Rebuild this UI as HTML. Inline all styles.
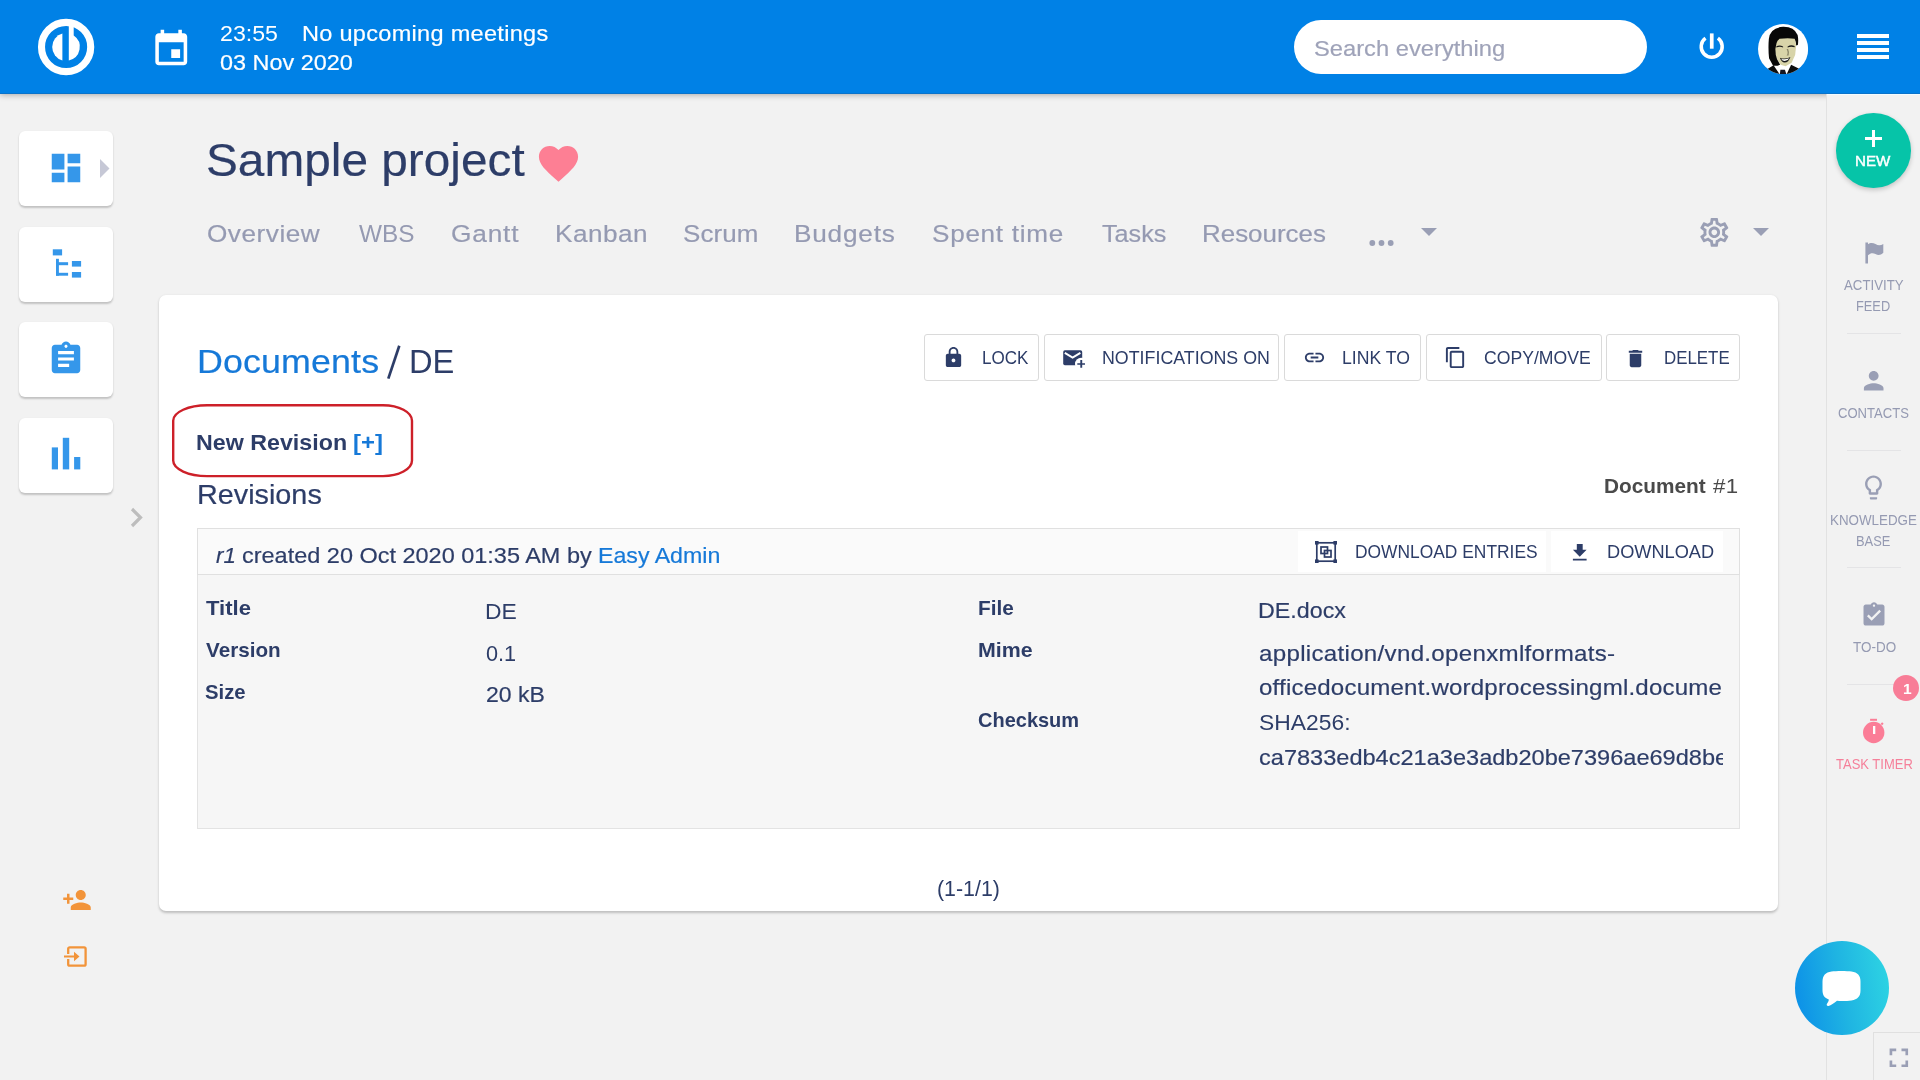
<!DOCTYPE html>
<html>
<head>
<meta charset="utf-8">
<title>Sample project - Documents</title>
<style>
*{box-sizing:border-box;margin:0;padding:0}
html,body{width:1920px;height:1080px;overflow:hidden}
body{background:#f2f2f2;font-family:"Liberation Sans",sans-serif;color:#2d3d68;position:relative}
.abs{position:absolute}
.t{position:absolute;white-space:nowrap;line-height:1;-webkit-text-stroke:0.2px currentColor;transform-origin:0 50%}
svg{position:absolute;display:block;overflow:visible}
#hdr{left:0;top:0;width:1920px;height:94px;background:#0081e6;border-bottom:1.500px solid #0a73ca;box-shadow:0 1px 6px rgba(0,0,0,.3)}
#search{left:1294px;top:20px;width:353px;height:54px;border-radius:27px;background:#fff}
.card{position:absolute;left:19px;width:94px;height:75px;background:#fff;border-radius:6px;box-shadow:0 1.5px 2px rgba(0,0,0,.2)}
#rbar{left:1826px;top:94px;width:94px;height:986px;background:#f2f2f2;border-left:1px solid #e2e2e2;box-shadow:inset 0 1px 0 #f3fcff}
.rsep{position:absolute;left:1847px;width:54px;height:1px;background:#e4e4e6}
#panel{left:159px;top:295px;width:1619px;height:616px;background:#fff;border-radius:7px;box-shadow:0 1.5px 2.5px rgba(0,0,0,.21)}
.btn{position:absolute;top:334px;height:47px;border:1px solid #dadada;border-radius:3px;background:#fff}
#rev{left:197px;top:528px;width:1543px;height:301px;background:#f6f6f6;border:1px solid #e3e3e3}
#revh{left:197px;top:528px;width:1543px;height:47px;background:#fafafa;border:1px solid #e0e0e0}
.wbtn{position:absolute;top:531px;height:41px;background:#fff}
.clip{position:absolute;left:1259px;width:463px;height:30px;overflow:hidden}
.clip .t{left:1.3px}
</style>

</head>
<body>
<div id="hdr" class="abs"></div>
<div id="search" class="abs"></div>
<div class="card" style="top:131px"></div>
<div class="card" style="top:227px"></div>
<div class="card" style="top:322px"></div>
<div class="card" style="top:418px"></div>
<div id="rbar" class="abs"></div>
<div class="rsep" style="top:333px"></div>
<div class="rsep" style="top:450px"></div>
<div class="rsep" style="top:567px"></div>
<div class="rsep" style="top:684px"></div>
<div id="panel" class="abs"></div>
<div class="btn" style="left:924px;width:115px"></div>
<div class="btn" style="left:1044px;width:235px"></div>
<div class="btn" style="left:1284px;width:137px"></div>
<div class="btn" style="left:1426px;width:176px"></div>
<div class="btn" style="left:1606px;width:134px"></div>
<div id="rev" class="abs"></div>
<div id="revh" class="abs"></div>
<div class="wbtn" style="left:1298px;width:248px"></div>
<div class="wbtn" style="left:1551px;width:172px"></div>

<!-- logo -->
<svg style="left:38px;top:19px" width="56" height="56" viewBox="0 0 56 56">
<circle cx="28.1" cy="28" r="24.6" fill="none" stroke="#fff" stroke-width="7.1"/>
<path d="M24.4 14.6 A13.9 13.9 0 0 0 24.4 41.4 Z" fill="#fff"/>
<path d="M30.8 41.5 V5 H35.7 V16.4 A13.9 13.9 0 0 1 30.8 41.5 Z" fill="#fff"/>
</svg>
<!-- calendar -->
<svg style="left:149.5px;top:28.2px" width="42.5" height="42.5" viewBox="0 0 24 24"><path fill="#fff" d="M17 12h-5v5h5v-5zM16 1v2H8V1H6v2H5c-1.11 0-1.99.9-1.99 2L3 19c0 1.1.89 2 2 2h14c1.1 0 2-.9 2-2V5c0-1.1-.9-2-2-2h-1V1h-2zm3 18H5V8h14v11z"/></svg>
<!-- power -->
<svg style="left:1690px;top:25px" width="40" height="40" viewBox="0 0 40 40"><path d="M27.900 13.200 A10.500 10.500 0 1 1 15.500 13.200" fill="none" stroke="#fff" stroke-width="3.500"/><rect x="19.900" y="8.400" width="3.700" height="15.300" fill="#fff"/></svg>
<!-- avatar -->
<svg style="left:1758px;top:23.600px" width="50.200" height="50.200" viewBox="0 0 50 50">
<defs><clipPath id="avc"><circle cx="25" cy="25" r="25"/></clipPath></defs>
<g clip-path="url(#avc)">
<rect width="50" height="50" fill="#fff"/>
<path d="M6 50 L9 45 L15.500 41.200 L21.500 50 Z M28.500 50 L33 40.500 L43 45.500 L46 50 Z" fill="#0d0d0d"/>
<path d="M22.300 45.500 h4.500 l1.500 4.500 h-6.500 z" fill="#15151f"/>
<path d="M16.500 16 L20 13.500 L37 14 L38 22 L37 31 L33.500 38.500 L27.500 42.200 L22.500 40.500 L18.500 34 L16.500 27 Z" fill="#d8d4a9"/>
<path d="M11 34 Q10 24 10.800 15 Q12 3.500 25 2.800 Q36 2.600 39.500 11 Q40.500 16 39.700 21 L38 21.500 Q37.800 17 36.500 14.800 Q30 13.500 21.500 14.800 Q19 16.500 18.500 19 L17.300 25 Q17.300 31 19 35 L22 40.500 L19.500 41.500 L15 41.500 Z" fill="#080808"/>
<path d="M18.300 22.200 Q21.500 20.600 25 22.400 L25 23.300 Q21.500 22.200 18.300 23.400Z M29.500 22.300 Q33 20.400 36.500 22 L36.500 23.200 Q33 22 29.500 23.300Z" fill="#1a1a1a"/>
<path d="M28.500 25 Q30.500 29 28.500 31.500 L30.500 31.500 Q31.500 28 30 25Z" fill="#8a8668"/>
<path d="M21.800 33.500 Q27 35.500 32.300 32.800 Q30.500 38.300 26.500 38.300 Q23.500 38 21.800 33.500Z" fill="#1a1a1a"/>
<path d="M23 34.500 Q27 36 31.200 34 Q29.500 36.800 26.600 36.900 Q24.300 36.800 23 34.500Z" fill="#fff"/>
</g></svg>
<!-- hamburger -->
<div class="abs" style="left:1857px;top:34px;width:32px;height:3.8px;background:#fff"></div>
<div class="abs" style="left:1857px;top:41px;width:32px;height:3.8px;background:#fff"></div>
<div class="abs" style="left:1857px;top:48px;width:32px;height:3.8px;background:#fff"></div>
<div class="abs" style="left:1857px;top:55px;width:32px;height:3.8px;background:#fff"></div>

<!-- left card icons -->
<svg style="left:47px;top:149px" width="38" height="38" viewBox="0 0 24 24"><path fill="#3597ea" d="M3 13h8V3H3v10zm0 8h8v-6H3v6zm10 0h8V11h-8v10zm0-18v6h8V3h-8z"/></svg>
<svg style="left:99.5px;top:159px" width="10" height="19" viewBox="0 0 10 19"><path fill="#c6c8d6" d="M0 0 L9.5 9.5 L0 19Z"/></svg>
<svg style="left:0;top:0" width="120" height="300" viewBox="0 0 120 300"><g fill="#3597ea">
<rect x="52.8" y="249.3" width="9.3" height="6.1"/>
<rect x="56" y="258.8" width="2.9" height="16.9"/>
<rect x="56" y="262.2" width="12.1" height="3"/>
<rect x="56" y="272.8" width="12.1" height="2.9"/>
<rect x="71.9" y="261" width="9.2" height="5.6"/>
<rect x="71.9" y="272" width="9.2" height="5.6"/>
</g></svg>
<svg style="left:47px;top:340px" width="38" height="38" viewBox="0 0 24 24"><path fill="#3597ea" d="M19 3h-4.180C14.4 1.84 13.3 1 12 1c-1.3 0-2.4.84-2.82 2H5c-1.1 0-2 .9-2 2v14c0 1.1.9 2 2 2h14c1.1 0 2-.9 2-2V5c0-1.1-.9-2-2-2zm-7 0c.55 0 1 .45 1 1s-.45 1-1 1-1-.45-1-1 .45-1 1-1zm2 14H7v-2h7v2zm3-4H7v-2h10v2zm0-4H7V7h10v2z"/></svg>
<svg style="left:0;top:0" width="120" height="500" viewBox="0 0 120 500"><g fill="#3597ea">
<rect x="51.8" y="447.4" width="6.2" height="22"/>
<rect x="62.8" y="437.8" width="6.4" height="31.6"/>
<rect x="74.1" y="457" width="6.2" height="12.4"/>
</g></svg>
<!-- chevron -->
<svg style="left:130px;top:507px" width="13" height="21" viewBox="0 0 13 21"><path d="M2 2 L10.5 10.5 L2 19" fill="none" stroke="#bdbdbd" stroke-width="3.2"/></svg>
<!-- bottom-left icons -->
<svg style="left:61.5px;top:884.8px" width="30" height="30" viewBox="0 0 24 24"><path fill="#f2943a" d="M15 12c2.21 0 4-1.79 4-4s-1.79-4-4-4-4 1.79-4 4 1.79 4 4 4zm-9-2V7H4v3H1v2h3v3h2v-3h3v-2H6zm9 4c-2.67 0-8 1.34-8 4v2h16v-2c0-2.66-5.33-4-8-4z"/></svg>
<svg style="left:64px;top:945.5px" width="23" height="21" viewBox="0 0 23 21"><g fill="none" stroke="#f2943a" stroke-width="2.3"><rect x="4.2" y="1.3" width="17.4" height="18.4" rx="1.5"/></g><rect x="2.5" y="8" width="4" height="5" fill="#f2f2f2"/><path d="M0 9.4 h10 v-3.6 l5.5 4.7 l-5.5 4.7 v-3.6 h-10z" fill="#f2943a"/></svg>

<!-- heart -->
<svg style="left:535px;top:140px" width="47" height="47" viewBox="0 0 24 24"><path fill="#fd7f94" d="M12 21.350l-1.45-1.32C5.4 15.36 2 12.28 2 8.5 2 5.42 4.42 3 7.5 3c1.74 0 3.41.81 4.5 2.09C13.09 3.81 14.76 3 16.5 3 19.58 3 22 5.42 22 8.5c0 3.78-3.4 6.86-8.55 11.54L12 21.35z"/></svg>
<!-- menu dots, arrows, gear -->
<svg style="left:1369px;top:238.5px" width="25" height="8" viewBox="0 0 25 8"><g fill="#9a9fb5"><circle cx="3.3" cy="4" r="2.9"/><circle cx="12.5" cy="4" r="2.9"/><circle cx="21.700" cy="4" r="2.9"/></g></svg>
<svg style="left:1420.8px;top:228.4px" width="16" height="8" viewBox="0 0 16 8"><path fill="#9a9fb5" d="M0 0h16L8 8z"/></svg>
<svg style="left:1752.7px;top:228.4px" width="16" height="8" viewBox="0 0 16 8"><path fill="#9a9fb5" d="M0 0h16L8 8z"/></svg>
<svg style="left:1696.500px;top:214.7px" width="34.600" height="34.600" viewBox="0 0 24 24"><path fill="#9a9fb5" d="M19.43 12.98c.04-.32.07-.64.07-.98 0-.34-.03-.66-.07-.98l2.110-1.650c.19-.15.24-.42.12-.64l-2-3.460c-.09-.16-.26-.25-.44-.25-.06 0-.12.010-.17.030l-2.490 1c-.52-.4-1.080-.73-1.690-.98l-.38-2.650C14.460 2.180 14.250 2 14 2h-4c-.25 0-.46.180-.49.420l-.38 2.650c-.61.250-1.170.59-1.690.98l-2.490-1c-.06-.020-.12-.030-.18-.030-.17 0-.34.090-.43.250l-2 3.460c-.13.220-.07.49.12.64l2.110 1.650c-.04.320-.07.650-.07.980 0 .33.030.66.070.98l-2.110 1.650c-.19.150-.24.420-.12.640l2 3.460c.09.160.26.250.44.250.06 0 .12-.010.170-.030l2.490-1c.52.400 1.080.73 1.690.98l.38 2.650c.03.240.24.420.49.420h4c.25 0 .46-.18.490-.42l.38-2.650c.61-.25 1.170-.59 1.690-.98l2.490 1c.06.020.12.030.18.030.17 0 .34-.09.430-.25l2-3.460c.12-.22.070-.49-.12-.64l-2.110-1.650zm-1.980-1.710c.04.310.05.520.05.730 0 .21-.02.430-.05.730l-.14 1.130.89.700 1.080.84-.7 1.210-1.270-.51-1.040-.42-.9.680c-.43.320-.84.560-1.250.73l-1.060.43-.16 1.130-.2 1.350h-1.400l-.19-1.350-.16-1.130-1.060-.43c-.43-.18-.83-.41-1.230-.71l-.91-.7-1.060.43-1.270.51-.7-1.210 1.080-.84.890-.7-.14-1.130c-.03-.31-.05-.54-.05-.74s.02-.43.050-.73l.14-1.130-.89-.7-1.080-.84.700-1.210 1.270.51 1.040.42.900-.68c.43-.32.840-.56 1.250-.73l1.060-.43.160-1.130.2-1.350h1.390l.19 1.350.16 1.130 1.060.43c.43.180.83.410 1.230.71l.91.700 1.060-.43 1.270-.51.700 1.210-1.070.85-.89.700.14 1.130zM12 8c-2.210 0-4 1.790-4 4s1.790 4 4 4 4-1.790 4-4-1.790-4-4-4zm0 6c-1.100 0-2-.9-2-2s.9-2 2-2 2 .9 2 2-.9 2-2 2z"/></svg>
<!-- button icons -->
<svg style="left:942px;top:346.3px" width="23" height="23" viewBox="0 0 24 24"><path fill="#2d3d68" d="M18 8h-1V6c0-2.760-2.240-5-5-5S7 3.240 7 6v2H6c-1.100 0-2 .9-2 2v10c0 1.100.9 2 2 2h12c1.100 0 2-.9 2-2V10c0-1.100-.9-2-2-2zm-6 9c-1.100 0-2-.9-2-2s.9-2 2-2 2 .9 2 2-.9 2-2 2zm3.100-9H8.900V6c0-1.710 1.390-3.100 3.100-3.100 1.710 0 3.100 1.390 3.100 3.100v2z"/></svg>
<svg style="left:1063px;top:349.500px" width="23" height="19" viewBox="0 0 23 19"><defs><mask id="mm"><rect width="23" height="19" fill="#fff"/><circle cx="18.200" cy="14" r="6.200" fill="#000"/></mask></defs><g mask="url(#mm)"><rect x="0.200" y="0.300" width="19" height="15" rx="1.700" fill="#2d3d68"/><path d="M1.800 2.900 L9.600 7.700 L17.400 2.900" fill="none" stroke="#fff" stroke-width="2"/></g><path fill="#2d3d68" d="M14.300 13.200 h7.700 v1.600 h-7.700z M17.300 10.100 h1.900 v7.700 h-1.900z"/></svg>
<svg style="left:1302.600px;top:346px" width="23" height="23" viewBox="0 0 24 24"><path fill="#2d3d68" d="M3.900 12c0-1.710 1.390-3.100 3.100-3.100h4V7H7c-2.760 0-5 2.240-5 5s2.240 5 5 5h4v-1.900H7c-1.710 0-3.100-1.390-3.100-3.100zM8 13h8v-2H8v2zm9-6h-4v1.900h4c1.710 0 3.100 1.390 3.100 3.100s-1.390 3.100-3.100 3.100h-4V17h4c2.760 0 5-2.240 5-5s-2.240-5-5-5z"/></svg>
<svg style="left:1444.200px;top:345.500px" width="23" height="23" viewBox="0 0 24 24"><path fill="#2d3d68" d="M16 1H4c-1.100 0-2 .9-2 2v14h2V3h12V1zm3 4H8c-1.100 0-2 .9-2 2v14c0 1.100.9 2 2 2h11c1.100 0 2-.9 2-2V7c0-1.100-.9-2-2-2zm0 16H8V7h11v14z"/></svg>
<svg style="left:1624px;top:346.500px" width="23" height="23" viewBox="0 0 24 24"><path fill="#2d3d68" d="M6 19c0 1.100.9 2 2 2h8c1.100 0 2-.9 2-2V7H6v12zM19 4h-3.500l-1-1h-5l-1 1H5v2h14V4z"/></svg>
<!-- download entries icon -->
<svg style="left:1315px;top:540.500px" width="22" height="22" viewBox="0 0 22 22"><g fill="none" stroke="#2d3d68" stroke-width="1.700"><rect x="1.800" y="1.800" width="18.400" height="18.400"/><rect x="6" y="6" width="6.500" height="6.500"/><rect x="9.500" y="9.500" width="6.500" height="6.500"/></g><g fill="#2d3d68"><rect x="0" y="0" width="3.600" height="3.600"/><rect x="18.400" y="0" width="3.600" height="3.600"/><rect x="0" y="18.400" width="3.600" height="3.600"/><rect x="18.400" y="18.400" width="3.600" height="3.600"/></g></svg>
<svg style="left:1567.600px;top:540.800px" width="23.500" height="23.500" viewBox="0 0 24 24"><path fill="#2d3d68" d="M19 9h-4V3H9v6H5l7 7 7-7zM5 18v2h14v-2H5z"/></svg>
<!-- red rounded outline -->
<svg style="left:172px;top:403.700px" width="242.400" height="73.500" viewBox="0 0 242.400 73.500"><path d="M35.2 1.2 H211.0 A29 15.5 0 0 1 240.0 16.7 V56.599999999999994 A29 15.5 0 0 1 211.0 72.1 H35.2 A34 15.5 0 0 1 1.2 56.599999999999994 V16.7 A34 15.5 0 0 1 35.2 1.2 Z" fill="none" stroke="#cd2029" stroke-width="2.400"/></svg>
<!-- NEW button -->
<div class="abs" style="left:1836px;top:113px;width:74.600px;height:74.600px;border-radius:50%;background:#06c4a8;box-shadow:0 2px 5px rgba(0,0,0,.2)"></div>
<div class="abs" style="left:1865px;top:137.100px;width:17px;height:2.700px;background:#fff"></div>
<div class="abs" style="left:1872.100px;top:130px;width:2.700px;height:17px;background:#fff"></div>
<!-- right bar icons -->
<svg style="left:1865px;top:241.500px" width="19.500" height="21.500" viewBox="0 0 19.500 21.500"><path fill="#9a9fb5" d="M0.400 0.600 h2.600 v20.800 h-2.600z M3 2.300 C5 0.500 8 0.600 10.500 2.100 C13 3.600 15.500 3.800 18.300 2 V10.800 C15.500 13.500 13 13.500 10.500 12 C8 10.600 5.500 10.800 3 13.200 Z"/></svg>
<svg style="left:1859.300px;top:366.300px" width="29.400" height="29.400" viewBox="0 0 24 24"><path fill="#9a9fb5" d="M12 12c2.210 0 4-1.790 4-4s-1.790-4-4-4-4 1.790-4 4 1.790 4 4 4zm0 2c-2.670 0-8 1.340-8 4v2h16v-2c0-2.660-5.330-4-8-4z"/></svg>
<svg style="left:1859.300px;top:473.200px" width="29" height="29" viewBox="0 0 24 24"><path fill="#9a9fb5" d="M9 21c0 .55.450 1 1 1h4c.55 0 1-.45 1-1v-1H9v1zm3-19C8.140 2 5 5.140 5 9c0 2.380 1.190 4.470 3 5.740V17c0 .55.450 1 1 1h6c.55 0 1-.45 1-1v-2.260c1.810-1.270 3-3.360 3-5.740 0-3.860-3.140-7-7-7zm2.850 11.100l-.85.600V16h-4v-2.300l-.85-.6C7.800 12.160 7 10.630 7 9c0-2.760 2.240-5 5-5s5 2.240 5 5c0 1.630-.8 3.160-2.150 4.100z"/></svg>
<svg style="left:1859.800px;top:600.600px" width="28" height="28" viewBox="0 0 24 24"><path fill="#9a9fb5" d="M19 3h-4.180C14.400 1.840 13.300 1 12 1c-1.300 0-2.400.84-2.820 2H5c-1.100 0-2 .9-2 2v14c0 1.100.9 2 2 2h14c1.100 0 2-.9 2-2V5c0-1.100-.9-2-2-2zm-7 0c.55 0 1 .45 1 1s-.45 1-1 1-1-.45-1-1 .45-1 1-1zm-2 14l-4-4 1.410-1.410L10 14.170l6.590-6.590L18 9l-8 8z"/></svg>
<!-- timer -->
<svg style="left:1862px;top:717px" width="24" height="27" viewBox="0 0 24 27"><g fill="#fb7d97"><circle cx="11.700" cy="15.500" r="10.700"/><rect x="8.100" y="1.800" width="6.900" height="2"/><path d="M18.600 6.800 l1.500-1.500 l1.500 1.500 l-1.500 1.500z"/></g><rect x="11" y="9" width="2.300" height="8" fill="#fff"/></svg>
<!-- badge -->
<div class="abs" style="left:1893.200px;top:674.900px;width:26.200px;height:26.200px;border-radius:50%;background:#f87d97"></div>
<!-- chat -->
<div class="abs" style="left:1795px;top:941px;width:94px;height:94px;border-radius:50%;background:linear-gradient(80deg,#0a8ce8 0%,#1fb4e2 50%,#2fd7e3 100%)"></div>
<svg style="left:1822px;top:970.500px" width="39" height="36" viewBox="0 0 39 36"><path fill="#fff" d="M9.500 0.500 C14 -0.200 25 -0.200 29.500 0.500 C35.500 1.400 38.500 4.500 38.500 10.500 V19.500 C38.500 25.500 35.500 28.500 29.500 29.400 C25 30.100 19 30.200 15 29.800 C12 32.500 9 34.300 6.500 34.900 C5 35.200 4.200 34 5 32.800 C6.200 31 6.800 29.600 6.800 28.500 C2.500 27 0.500 24 0.500 19.500 V10.500 C0.500 4.500 3.500 1.400 9.500 0.500 Z"/></svg>
<!-- fullscreen box -->
<div class="abs" style="left:1873px;top:1032px;width:47px;height:48px;background:#f2f2f2;border-left:1px solid #e0e0e0;border-top:1px solid #e0e0e0"></div>
<svg style="left:1882.700px;top:1041.600px" width="31.700" height="31.700" viewBox="0 0 24 24"><path fill="#9a9fb5" d="M7 14H5v5h5v-2H7v-3zm-2-4h2V7h3V5H5v5zm12 7h-3v2h5v-5h-2v3zM14 5v2h3v3h2V5h-5z"/></svg>
<!-- slash -->
<svg style="left:380px;top:340px" width="30" height="45" viewBox="0 0 30 45"><path d="M8.300 38.600 L19.300 5.800" stroke="#2d3d68" stroke-width="2.700" fill="none"/></svg>

<div class="t" style="left:220.19px;top:23.37px;font-size:21.84px;color:#ffffff;transform:scaleX(1.062);-webkit-text-stroke:0">23:55</div>
<div class="t" style="left:302.19px;top:23.34px;font-size:21.84px;color:#ffffff;transform:scaleX(1.0771);letter-spacing:0.28px">No upcoming meetings</div>
<div class="t" style="left:220.19px;top:52.14px;font-size:21.84px;color:#ffffff;transform:scaleX(1.0727)">03 Nov 2020</div>
<div class="t" style="left:1314.0px;top:36.86px;font-size:22.88px;color:#9fa3b9;transform:scaleX(1.037)">Search everything</div>
<div class="t" style="left:205.9px;top:137.23px;font-size:46.8px;color:#2d3d68;transform:scaleX(1.0209)">Sample project</div>
<div class="t" style="left:206.5px;top:222.3px;font-size:24.44px;color:#959ab2;transform:scaleX(1.07);letter-spacing:0.497px">Overview</div>
<div class="t" style="left:358.5px;top:222.32px;font-size:24.44px;color:#959ab2;transform:scaleX(0.9972);-webkit-text-stroke:0">WBS</div>
<div class="t" style="left:450.9px;top:222.3px;font-size:24.44px;color:#959ab2;transform:scaleX(1.0749);letter-spacing:0.746px">Gantt</div>
<div class="t" style="left:554.7px;top:222.3px;font-size:24.44px;color:#959ab2;transform:scaleX(1.0688);letter-spacing:0.484px">Kanban</div>
<div class="t" style="left:683.01px;top:222.3px;font-size:24.44px;color:#959ab2;transform:scaleX(1.0628);letter-spacing:0.111px">Scrum</div>
<div class="t" style="left:794.4px;top:222.3px;font-size:24.44px;color:#959ab2;transform:scaleX(1.0722);letter-spacing:0.72px">Budgets</div>
<div class="t" style="left:932.0px;top:222.3px;font-size:24.44px;color:#959ab2;transform:scaleX(1.0684);letter-spacing:0.676px">Spent time</div>
<div class="t" style="left:1101.7px;top:222.3px;font-size:24.44px;color:#959ab2;transform:scaleX(1.0314)">Tasks</div>
<div class="t" style="left:1202.2px;top:222.3px;font-size:24.44px;color:#959ab2;transform:scaleX(1.0612)">Resources</div>
<div class="t" style="left:196.78px;top:345.47px;font-size:33.28px;color:#1679d8;transform:scaleX(1.0766);letter-spacing:0.105px">Documents</div>
<div class="t" style="left:408.52px;top:345.49px;font-size:33.28px;color:#2d3d68;transform:scaleX(0.9816);-webkit-text-stroke:0">DE</div>
<div class="t" style="left:981.9px;top:349.4px;font-size:18.2px;color:#2d3d68;transform:scaleX(0.9382);-webkit-text-stroke:0">LOCK</div>
<div class="t" style="left:1101.5px;top:349.4px;font-size:18.2px;color:#2d3d68;transform:scaleX(0.9794);-webkit-text-stroke:0">NOTIFICATIONS ON</div>
<div class="t" style="left:1342.29px;top:349.4px;font-size:18.2px;color:#2d3d68;transform:scaleX(0.9702);-webkit-text-stroke:0">LINK TO</div>
<div class="t" style="left:1484.18px;top:349.39px;font-size:18.2px;color:#2d3d68;transform:scaleX(0.9691);-webkit-text-stroke:0">COPY/MOVE</div>
<div class="t" style="left:1664.1px;top:349.39px;font-size:18.2px;color:#2d3d68;transform:scaleX(0.9279);-webkit-text-stroke:0">DELETE</div>
<div class="t" style="left:196.27px;top:431.66px;font-size:22.26px;color:#2d3d68;transform:scaleX(1.0444);-webkit-text-stroke:0;font-weight:bold">New Revision</div>
<div class="t" style="left:353.27px;top:431.67px;font-size:22.26px;color:#1679d8;transform:scaleX(1.0763);-webkit-text-stroke:0;font-weight:bold">[+]</div>
<div class="t" style="left:196.89px;top:481.37px;font-size:27.25px;color:#2d3d68;transform:scaleX(1.0562)">Revisions</div>
<div class="t" style="left:1603.99px;top:476.6px;font-size:19.97px;color:#4a4a4a;transform:scaleX(1.0423);-webkit-text-stroke:0;font-weight:bold">Document</div>
<div class="t" style="left:1713.0px;top:476.76px;font-size:19.97px;color:#4a4a4a;transform:scaleX(1.1165);letter-spacing:0.333px;-webkit-text-stroke:0">#1</div>
<div class="t" style="left:216.2px;top:544.82px;font-size:22.46px;color:#2d3d68;transform:scaleX(0.9959);font-style:italic">r1</div>
<div class="t" style="left:241.99px;top:544.82px;font-size:22.46px;color:#2d3d68;transform:scaleX(1.0455)">created 20 Oct 2020 01:35 AM by</div>
<div class="t" style="left:597.75px;top:544.82px;font-size:22.46px;color:#1679d8;transform:scaleX(1.0318)">Easy Admin</div>
<div class="t" style="left:1354.5px;top:543.05px;font-size:18.2px;color:#2d3d68;transform:scaleX(0.956);-webkit-text-stroke:0">DOWNLOAD ENTRIES</div>
<div class="t" style="left:1607.24px;top:543.04px;font-size:18.2px;color:#2d3d68;transform:scaleX(1.0003);-webkit-text-stroke:0">DOWNLOAD</div>
<div class="t" style="left:206.0px;top:598.49px;font-size:20.8px;color:#2d3d68;transform:scaleX(1.062);-webkit-text-stroke:0;font-weight:bold">Title</div>
<div class="t" style="left:206.0px;top:639.89px;font-size:20.8px;color:#2d3d68;transform:scaleX(0.9943);-webkit-text-stroke:0;font-weight:bold">Version</div>
<div class="t" style="left:204.96px;top:681.89px;font-size:20.8px;color:#2d3d68;transform:scaleX(0.9759);-webkit-text-stroke:0;font-weight:bold">Size</div>
<div class="t" style="left:484.72px;top:601.25px;font-size:22.46px;color:#2d3d68;transform:scaleX(1.0195);-webkit-text-stroke:0">DE</div>
<div class="t" style="left:485.85px;top:642.65px;font-size:22.46px;color:#2d3d68;transform:scaleX(0.9654);-webkit-text-stroke:0">0.1</div>
<div class="t" style="left:485.9px;top:683.82px;font-size:22.46px;color:#2d3d68;transform:scaleX(1.0245)">20 kB</div>
<div class="t" style="left:978.4px;top:598.49px;font-size:20.8px;color:#2d3d68;transform:scaleX(0.9982);-webkit-text-stroke:0;font-weight:bold">File</div>
<div class="t" style="left:978.39px;top:639.89px;font-size:20.8px;color:#2d3d68;transform:scaleX(1.0274);-webkit-text-stroke:0;font-weight:bold">Mime</div>
<div class="t" style="left:978.39px;top:710.09px;font-size:20.8px;color:#2d3d68;transform:scaleX(0.9611);-webkit-text-stroke:0;font-weight:bold">Checksum</div>
<div class="t" style="left:1258.27px;top:599.82px;font-size:22.46px;color:#2d3d68;transform:scaleX(1.0358)">DE.docx</div>
<div class="t" style="left:1259.3px;top:642.68px;font-size:22.46px;color:#2d3d68;transform:scaleX(1.0739);letter-spacing:0.279px">application/vnd.openxmlformats-</div>
<div class="t" style="left:1259.3px;top:677.23px;font-size:22.46px;color:#2d3d68;transform:scaleX(1.0728);letter-spacing:0.172px">officedocument.wordprocessingml.docume</div>
<div class="t" style="left:1259.3px;top:746.82px;font-size:22.46px;color:#2d3d68;transform:scaleX(1.0494)">ca7833edb4c21a3e3adb20be7396ae69d8be</div>
<div class="t" style="left:1259.29px;top:712.4px;font-size:22.46px;color:#2d3d68;transform:scaleX(1.018);-webkit-text-stroke:0">SHA256:</div>
<div class="t" style="left:937.29px;top:878.09px;font-size:21.22px;color:#2d3d68;transform:scaleX(1.0062);-webkit-text-stroke:0">(1-1/1)</div>
<div class="t" style="left:1855.19px;top:152.5px;font-size:15.18px;color:#ffffff;transform:scaleX(0.9981);-webkit-text-stroke:0.45px currentColor">NEW</div>
<div class="t" style="left:1844.4px;top:278.43px;font-size:14.56px;color:#959ab2;transform:scaleX(0.9095);-webkit-text-stroke:0">ACTIVITY</div>
<div class="t" style="left:1856.3px;top:299.43px;font-size:14.56px;color:#959ab2;transform:scaleX(0.8795);-webkit-text-stroke:0">FEED</div>
<div class="t" style="left:1838.28px;top:406.43px;font-size:14.56px;color:#959ab2;transform:scaleX(0.8992);-webkit-text-stroke:0">CONTACTS</div>
<div class="t" style="left:1830.09px;top:513.48px;font-size:14.56px;color:#959ab2;transform:scaleX(0.9185);-webkit-text-stroke:0">KNOWLEDGE</div>
<div class="t" style="left:1856.29px;top:534.48px;font-size:14.56px;color:#959ab2;transform:scaleX(0.8871);-webkit-text-stroke:0">BASE</div>
<div class="t" style="left:1852.7px;top:640.43px;font-size:14.56px;color:#959ab2;transform:scaleX(0.9247);-webkit-text-stroke:0">TO-DO</div>
<div class="t" style="left:1836.0px;top:757.33px;font-size:14.56px;color:#f5809a;transform:scaleX(0.8939);-webkit-text-stroke:0">TASK TIMER</div>
<div class="t" style="left:1902.6px;top:682.27px;font-size:14.14px;color:#ffffff;transform:scaleX(1.1);-webkit-text-stroke:0;font-weight:bold">1</div>
<div class="abs" style="left:1722.8px;top:740px;width:16px;height:34px;background:#f6f6f6"></div>
</body>
</html>
